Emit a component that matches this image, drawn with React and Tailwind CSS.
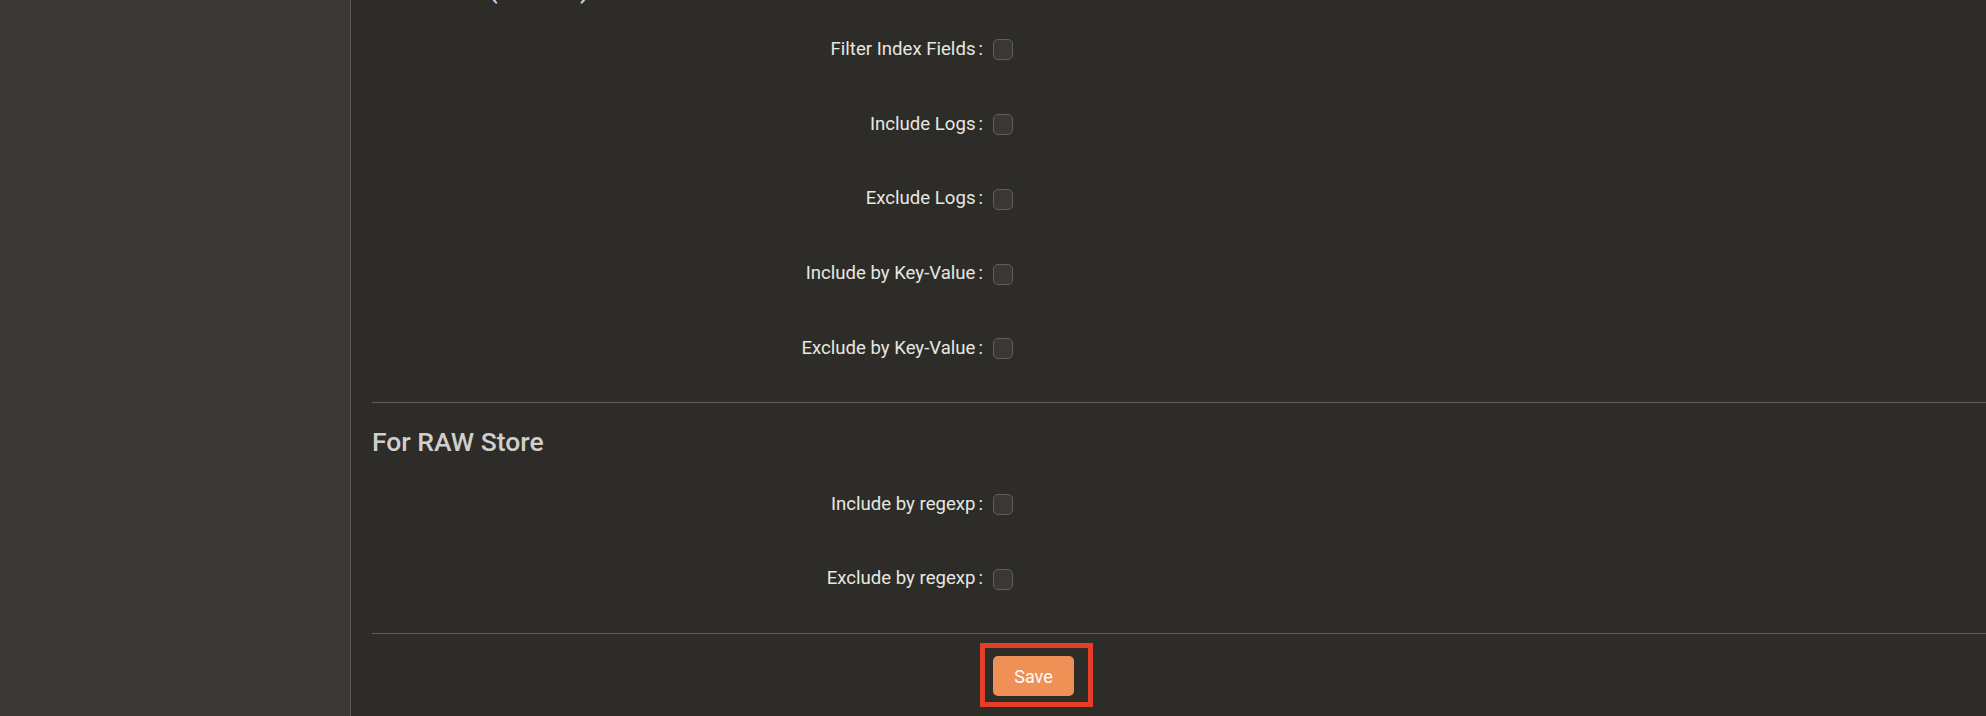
const indexFields = [
  'Filter Index Fields',
  'Include Logs',
  'Exclude Logs',
  'Include by Key-Value',
  'Exclude by Key-Value',
];

const rawFields = ['Include by regexp', 'Exclude by regexp'];

function FieldRow({ label }) {
  return (
    <div className="grid grid-cols-[621px_1fr] items-center h-[74.75px]">
      <label className="flex justify-end items-center text-[18.6px] text-[#e8e6e2]">
        {label}
        <span className="ml-[3px] mr-[10px]">:</span>
      </label>
      <div className="flex items-center">
        <span className="block w-[20px] h-[21px] rounded-[5px] border border-[#5f5e5a] bg-[#393834]" />
      </div>
    </div>
  );
}

export default function App() {
  return (
    <div
      className="flex h-[716px] w-full overflow-hidden bg-[#2d2c28]"
      style={{ fontFamily: 'Roboto, "Noto Sans", sans-serif' }}
    >
      <aside className="w-[351px] shrink-0 bg-[#3a3935] border-r border-[#5b5a56]" />

      <main className="flex-1 pl-[21px]">
        <h2 className="-mt-[31px] h-[39px] leading-[39px] text-[26.5px] font-medium text-[#d0cfcb]">
          For Index (Search)
        </h2>

        <div className="mt-[4.5px]">
          {indexFields.map((f) => (
            <FieldRow key={f} label={f} />
          ))}
        </div>

        <div className="mt-[15.5px] border-t border-[#5f5e5a]" />

        <h2 className="mt-[19px] h-[39px] leading-[39px] text-[26.5px] font-medium text-[#d0cfcb]">
          For RAW Store
        </h2>

        <div className="mt-[6.5px]">
          {rawFields.map((f) => (
            <FieldRow key={f} label={f} />
          ))}
        </div>

        <div className="mt-[16.5px] border-t border-[#5f5e5a]" />

        <div className="grid grid-cols-[621px_1fr] mt-[22px]">
          <div />
          <div>
            <div className="relative inline-block">
              <button className="w-[81px] h-[40px] rounded-[5px] bg-[#ef9157] text-white text-[18px]">
                Save
              </button>
              <span className="absolute -left-[13px] -top-[13px] w-[113px] h-[64px] border-[5px] border-[#e63e26] pointer-events-none" />
            </div>
          </div>
        </div>
      </main>
    </div>
  );
}
